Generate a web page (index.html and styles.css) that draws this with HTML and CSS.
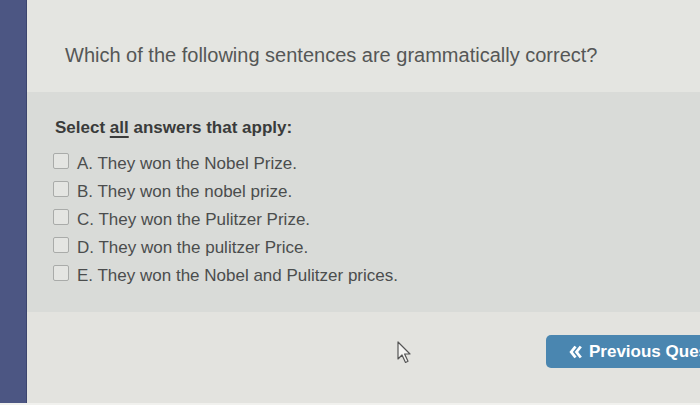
FILE: index.html
```html
<!DOCTYPE html>
<html>
<head>
<meta charset="utf-8">
<link rel="stylesheet" href="styles.css">
</head>
<body>
<div class="screen">
  <div class="strip"></div>
  <div class="main">
    <div class="question">
      <p class="q-text">Which of the following sentences are grammatically correct?</p>
    </div>
    <div class="answers">
      <p class="instr">Select <span class="u">all</span> answers that apply:</p>
      <ul class="opts">
        <li class="opt"><span class="box"></span><span class="label">A. They won the Nobel Prize.</span></li>
        <li class="opt"><span class="box"></span><span class="label">B. They won the nobel prize.</span></li>
        <li class="opt"><span class="box"></span><span class="label">C. They won the Pulitzer Prize.</span></li>
        <li class="opt"><span class="box"></span><span class="label">D. They won the pulitzer Price.</span></li>
        <li class="opt"><span class="box"></span><span class="label">E. They won the Nobel and Pulitzer prices.</span></li>
      </ul>
    </div>
    <div class="footer">
      <button class="prev"><svg class="chev" width="14" height="14" viewBox="0 0 14 14"><path d="M6.5 1.5 L2.2 7 L6.5 12.5 M11.8 1.5 L7.5 7 L11.8 12.5" fill="none" stroke="#fff" stroke-width="2.8" stroke-linejoin="miter"/></svg><span>Previous Question</span></button>
    </div>
  </div>
  <svg class="cursor" width="15" height="23" viewBox="0 0 15 23"><path d="M1 1 L1 18 L5 14 L8.5 21.5 L11 20.3 L7.6 13 L13 13 Z" fill="#f4f4f2" stroke="#555" stroke-width="1.2" stroke-linejoin="round"/></svg>
</div>
</body>
</html>
```
FILE: styles.css
```css
html, body {
  margin: 0;
  padding: 0;
  width: 700px;
  height: 405px;
  overflow: hidden;
  background: #e3e3df;
}
.screen {
  position: relative;
  display: flex;
  width: 700px;
  height: 403px;
  border-bottom: 2px solid #f1f1ee;
  overflow: hidden;
  font-family: "Liberation Sans", Arial, sans-serif;
}
.strip {
  width: 26px;
  flex: none;
  background: #4c5683;
  border-right: 1px solid #3c456e;
}
.main {
  flex: 1;
  display: flex;
  flex-direction: column;
  min-width: 0;
}
.question {
  height: 92px;
  flex: none;
  box-sizing: border-box;
  padding: 44px 0 0 38px;
  background: #e4e5e1;
}
.q-text {
  margin: 0;
  font-size: 20px;
  line-height: 23px;
  color: #555756;
}
.answers {
  height: 220px;
  flex: none;
  box-sizing: border-box;
  padding: 26px 0 0 28px;
  background: #d9dbd8;
}
.instr {
  margin: 0;
  font-size: 17px;
  line-height: 20px;
  font-weight: bold;
  color: #3a3b3b;
}
.u {
  text-decoration: underline;
  text-decoration-thickness: 2px;
  text-underline-offset: 3px;
}
.opts {
  list-style: none;
  margin: 15px 0 0 -2px;
  padding: 0;
}
.opt {
  display: flex;
  align-items: flex-start;
  gap: 8px;
  height: 28px;
}
.box {
  width: 14px;
  height: 14px;
  flex: none;
  border: 1px solid #a9aba9;
  border-radius: 2px;
  background: #e4e5e2;
}
.label {
  font-size: 17px;
  line-height: 20px;
  margin-top: 1px;
  color: #4b4d4d;
}
.footer {
  flex: 1;
  display: flex;
  padding: 23px 0 0 519px;
  background: #e3e3df;
}
.prev {
  flex: none;
  height: 33px;
  display: flex;
  align-items: center;
  gap: 6px;
  padding: 0 12px 0 23px;
  border: none;
  border-radius: 5px;
  background: #4a86b0;
  color: #fff;
  font-family: "Liberation Sans", Arial, sans-serif;
  font-size: 17px;
  font-weight: bold;
  white-space: nowrap;
}
.chev {
  display: block;
}
.cursor {
  position: absolute;
  left: 397px;
  top: 341px;
}
```
